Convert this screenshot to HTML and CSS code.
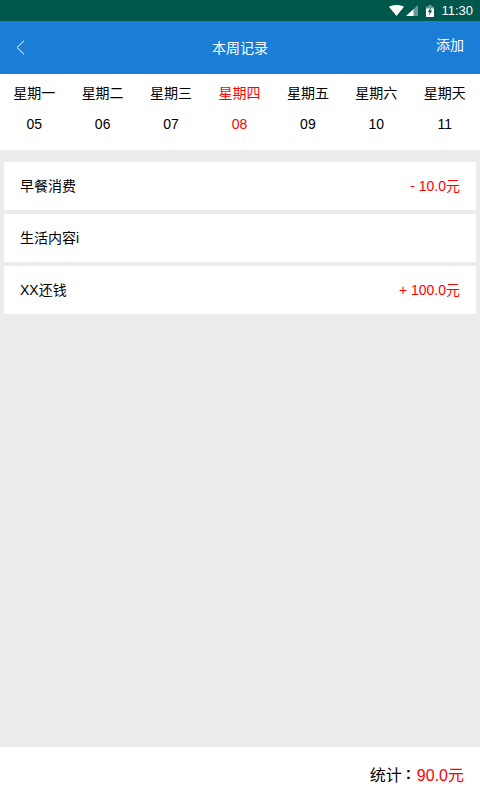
FILE: index.html
```html
<!DOCTYPE html>
<html lang="zh-CN">
<head>
<meta charset="utf-8">
<title>本周记录</title>
<link rel="stylesheet" href="styles.css">
</head>
<body>
<div class="app">
  <div class="statusbar">
    <svg class="ic-wifi" width="15" height="11" viewBox="0 0 15 11"><path d="M0 1.800C2 .6 4.800 0 7.500 0s5.500 .6 7.500 1.800L7.500 11z" fill="#fff"/></svg>
    <svg class="ic-signal" width="12" height="11" viewBox="0 0 12 11"><path d="M0 11L12 0v11z" fill="#fff" fill-opacity=".4"/><path d="M0 11L7.500 4.200V11z" fill="#fff"/></svg>
    <svg class="ic-batt" width="8" height="12" viewBox="0 0 8 12"><path d="M2.500 0h3v1.500H8V12H0V1.500h2.500z" fill="#fff" fill-opacity=".4"/><path d="M0 3.500h8V12H0z" fill="#fff"/><path d="M4.800 2.500L1.800 7h1.800L3 10.500l3.200-5H4.400z" fill="#00574b"/></svg>
    <span class="clock">11:30</span>
  </div>
  <header class="topbar">
    <div class="side">
      <svg class="back" width="9" height="15" viewBox="0 0 9 15"><path d="M8 .7L1 7.500l7 6.800" fill="none" stroke="#fff" stroke-width="1"/></svg>
    </div>
    <span class="title">本周记录</span>
    <div class="side side-end"><span class="add">添加</span></div>
  </header>
  <nav class="week">
    <div class="day"><span>星期一</span><span>05</span></div>
    <div class="day"><span>星期二</span><span>06</span></div>
    <div class="day"><span>星期三</span><span>07</span></div>
    <div class="day today"><span>星期四</span><span>08</span></div>
    <div class="day"><span>星期五</span><span>09</span></div>
    <div class="day"><span>星期六</span><span>10</span></div>
    <div class="day"><span>星期天</span><span>11</span></div>
  </nav>
  <main class="list">
    <div class="row"><span>早餐消费</span><span class="amount">- 10.0元</span></div>
    <div class="row"><span>生活内容i</span></div>
    <div class="row"><span>XX还钱</span><span class="amount">+ 100.0元</span></div>
  </main>
  <footer class="total"><span>统计</span><span class="colon">:</span><span class="sum">90.0元</span></footer>
</div>
</body>
</html>
```

FILE: styles.css
```css
* { box-sizing: border-box; }
html, body { margin: 0; padding: 0; }
body { font-family: "Liberation Sans", "Noto Sans CJK SC", sans-serif; color: #000; background: #ececec; }
.app { width: 480px; height: 800px; display: flex; flex-direction: column; overflow: hidden; }
.statusbar { height: 21px; flex: none; background: #00574b; display: flex; align-items: center; justify-content: flex-end; padding: 0 7px 0 0; color: #fff; }
.ic-wifi { margin-right: 2px; }
.ic-signal { margin-right: 8px; }
.ic-batt { margin-right: 7px; }
.clock { font-size: 13px; line-height: 21px; }
.topbar { height: 53px; flex: none; background: #1a7dd6; display: flex; align-items: center; color: #fff; padding: 0 16px; }
.side { flex: 1; display: flex; align-items: center; }
.side-end { justify-content: flex-end; }
.title { font-size: 14px; margin-bottom: 1px; }
.add { font-size: 14px; margin-bottom: 7px; }
.back { flex: none; }
.week { height: 76px; flex: none; background: #fff; display: flex; padding-right: 1px; }
.day { flex: 1; display: flex; flex-direction: column; align-items: center; font-size: 14px; gap: 11px; padding-top: 9px; line-height: 20px; }
.today { color: #f00; }
.list { flex: 1; display: flex; flex-direction: column; gap: 4px; padding: 12px 4px 0; }
.row { height: 48px; background: #fff; display: flex; align-items: center; justify-content: space-between; padding: 0 16px; font-size: 14px; line-height: 20px; }
.amount { color: #f00; }
.total { height: 53px; flex: none; background: #fff; display: flex; align-items: center; justify-content: flex-end; padding: 0 16px 0 0; font-size: 16px; }
.colon { width: 15px; padding-right: 2px; text-align: center; font-weight: 700; }
.sum { color: #f00; }
```
